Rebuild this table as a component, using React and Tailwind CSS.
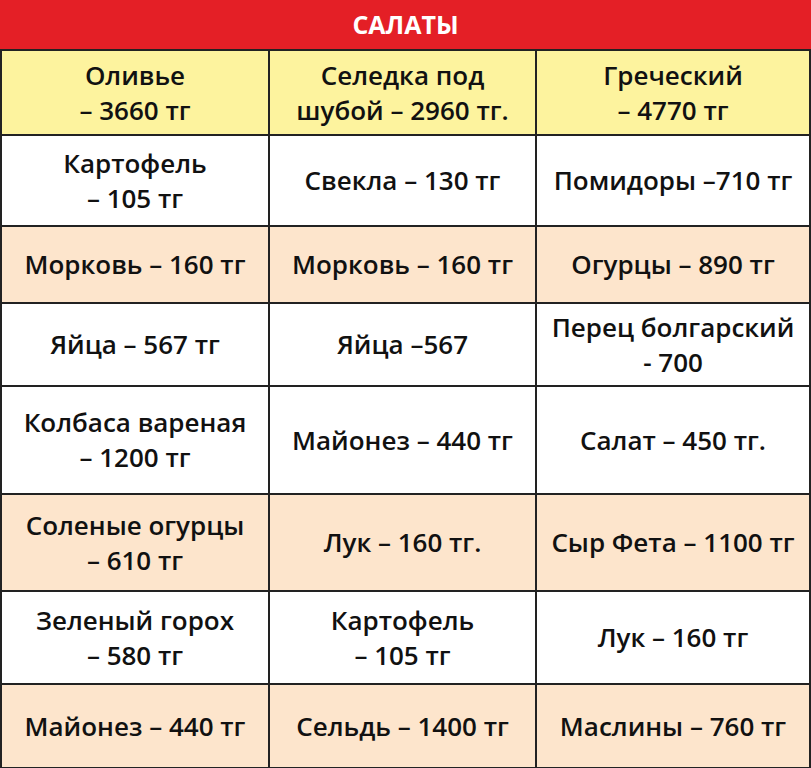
// Таблица цен на ингредиенты салатов
const head = [
  ['Оливье', '– 3660 тг'],
  ['Селедка под', 'шубой – 2960 тг.'],
  ['Греческий', '– 4770 тг'],
]

const rows = [
  { h: 'h-[89px]', bg: 'bg-white', cells: [['Картофель', '– 105 тг'], ['Свекла – 130 тг'], ['Помидоры –710 тг']] },
  { h: 'h-[75px]', bg: 'bg-[#fde5cc]', cells: [['Морковь – 160 тг'], ['Морковь – 160 тг'], ['Огурцы – 890 тг']] },
  { h: 'h-[81px]', bg: 'bg-white', cells: [['Яйца – 567 тг'], ['Яйца –567'], ['Перец болгарский', '- 700']] },
  { h: 'h-[106px]', bg: 'bg-white', cells: [['Колбаса вареная', '– 1200 тг'], ['Майонез – 440 тг'], ['Салат – 450 тг.']] },
  { h: 'h-[95px]', bg: 'bg-[#fde5cc]', cells: [['Соленые огурцы', '– 610 тг'], ['Лук – 160 тг.'], ['Сыр Фета – 1100 тг']] },
  { h: 'h-[91px]', bg: 'bg-white', cells: [['Зеленый горох', '– 580 тг'], ['Картофель', '– 105 тг'], ['Лук – 160 тг']] },
  { h: 'h-[82px]', bg: 'bg-[#fde5cc]', cells: [['Майонез – 440 тг'], ['Сельдь – 1400 тг'], ['Маслины – 760 тг']] },
]

function Cell({ lines, h, bg }) {
  return (
    <div className={`${h} ${bg} flex flex-col items-center justify-center text-center leading-[35px]`}>
      {lines.map((l, i) => (
        <span key={i}>{l}</span>
      ))}
    </div>
  )
}

export default function App() {
  return (
    <div
      className="w-[811px] h-[768px] bg-white text-[#111] text-[26px] font-semibold"
      style={{ fontFamily: '"Open Sans", "Noto Sans", sans-serif' }}
    >
      {/* Заголовок */}
      <div className="h-[49px] bg-[#e41f26] flex items-center justify-center text-white text-[25px] font-bold">
        САЛАТЫ
      </div>

      {/* Сетка */}
      <div className="grid grid-cols-[266px_265px_272px] gap-[2px] bg-[#222] pt-[2px] px-[2px] pb-[1px]">
        {head.map((c, i) => (
          <Cell key={'h' + i} lines={c} h="h-[83px]" bg="bg-[#fdf39e]" />
        ))}
        {rows.map((r, ri) =>
          r.cells.map((c, ci) => <Cell key={ri + '-' + ci} lines={c} h={r.h} bg={r.bg} />)
        )}
      </div>
    </div>
  )
}
